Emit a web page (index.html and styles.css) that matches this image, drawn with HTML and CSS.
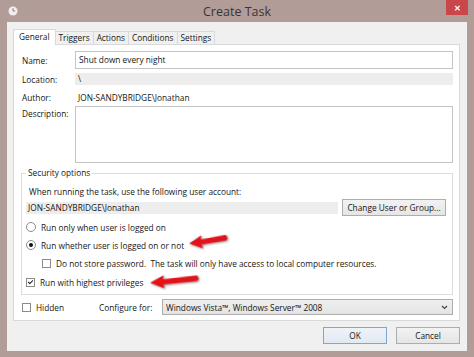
FILE: index.html
```html
<!DOCTYPE html>
<html lang="en">
<head>
    <meta charset="UTF-8">
    <title>Create Task</title>
    <link rel="stylesheet" href="styles.css">
</head>
<body>
    <div class="window">
        <div class="titlebar">
            <svg class="app-icon" width="10" height="10" viewBox="0 0 10 10">
                <circle cx="5" cy="5" r="4.5" fill="#f2eeed"/>
                <path d="M5 2.2 V5 H7.2" stroke="#8a7f7d" stroke-width="1" fill="none"/>
            </svg>
            <div class="title">Create Task</div>
            <div class="close-btn">&#x2715;</div>
        </div>

        <div class="client">
            <div class="tabs">
                <div class="tab active">General</div>
                <div class="tab">Triggers</div>
                <div class="tab">Actions</div>
                <div class="tab">Conditions</div>
                <div class="tab">Settings</div>
            </div>

            <div class="panel">
                <div class="row row-name">
                    <span class="label">Name:</span>
                    <div class="field input">Shut down every night</div>
                </div>
                <div class="row row-location">
                    <span class="label">Location:</span>
                    <div class="field readonly">\</div>
                </div>
                <div class="row row-author">
                    <span class="label">Author:</span>
                    <div class="field plain">JON-SANDYBRIDGE\Jonathan</div>
                </div>
                <div class="row row-desc">
                    <span class="label">Description:</span>
                    <div class="field textarea"></div>
                </div>

                <fieldset class="security">
                    <legend>Security options</legend>
                    <div class="note">When running the task, use the following user account:</div>
                    <div class="account-row">
                        <div class="account">JON-SANDYBRIDGE\Jonathan</div>
                        <div class="btn change-btn">Change User or Group...</div>
                    </div>
                    <div class="option"><span class="radio"></span>Run only when user is logged on</div>
                    <div class="option"><span class="radio checked"></span>Run whether user is logged on or not</div>
                    <div class="option sub"><span class="check"></span>Do not store password.&nbsp; The task will only have access to local computer resources.</div>
                    <div class="option"><span class="check checked"></span>Run with highest privileges</div>
                </fieldset>

                <div class="config-row">
                    <div class="option hidden-opt"><span class="check"></span>Hidden</div>
                    <span class="config-label">Configure for:</span>
                    <div class="combo">
                        <span>Windows Vista&trade;, Windows Server&trade; 2008</span>
                        <svg width="7" height="5" viewBox="0 0 7 5"><path d="M1 1 L3.5 3.5 L6 1" stroke="#444" stroke-width="1.2" fill="none"/></svg>
                    </div>
                </div>
            </div>

            <div class="buttons">
                <div class="btn default">OK</div>
                <div class="btn">Cancel</div>
            </div>
        </div>

        <!-- red annotation arrows drawn over the dialog -->
        <svg class="arrow arrow-one" width="40" height="14" viewBox="0 0 40 14">
            <path d="M0 7 L13 0.5 L12 4.5 L37 3 Q40 5.5 37 8.5 L12 9.5 L13 13.5 Z" fill="#e3121b"/>
        </svg>
        <svg class="arrow arrow-two" width="50" height="14" viewBox="0 0 50 14">
            <path d="M0 7 L14 0.5 L13 4.5 L47 3 Q50 5.5 47 8.5 L13 9.5 L14 13.5 Z" fill="#e3121b"/>
        </svg>
    </div>
</body>
</html>
```

FILE: styles.css
```css
:root {
    --frame-color: #b19c98;
    --client-bg: #f0f0f0;
    --panel-border: #d9d9d9;
    --field-border: #c4c4c4;
    --text-color: #151515;
}
body {
    margin: 0;
    font-family: 'Open Sans', 'Noto Sans', sans-serif;
    font-size: 8.3px;
    color: var(--text-color);
}
.window {
    position: relative;
    width: 474px;
    height: 357px;
    background-color: var(--frame-color);
    display: flex;
    flex-direction: column;
    box-sizing: border-box;
}
.titlebar {
    height: 22px;
    display: flex;
    align-items: center;
    position: relative;
}
.app-icon {
    margin-left: 8px;
}
.title {
    position: absolute;
    left: 0;
    right: 0;
    top: 3px;
    text-align: center;
    font-size: 12.5px;
    color: #3a3434;
}
.close-btn {
    position: absolute;
    top: 0;
    right: 6px;
    width: 22px;
    height: 15px;
    background-color: #c9464b;
    color: #fff;
    font-size: 8px;
    font-weight: 700;
    display: flex;
    align-items: center;
    justify-content: center;
}
.client {
    margin: 0 7px 6px 7px;
    height: 329px;
    background-color: var(--client-bg);
    padding: 8px 7px 0 6px;
    box-sizing: border-box;
}
.tabs {
    display: flex;
    align-items: flex-end;
    height: 14px;
    position: relative;
    z-index: 1;
}
.tab {
    height: 12px;
    line-height: 12px;
    padding: 0 3px;
    border: 1px solid var(--panel-border);
    border-bottom: none;
    margin-left: -1px;
    background-color: #f0f0f0;
}
.tab.active {
    height: 15px;
    line-height: 14px;
    margin-left: 0;
    margin-bottom: -1px;
    background-color: #fff;
    padding: 0 5px;
}
.panel {
    height: 277px;
    box-sizing: border-box;
    border: 1px solid var(--panel-border);
    background-color: #fff;
    padding: 6px 6px 0 8px;
}
.row {
    display: flex;
    align-items: center;
}
.label {
    width: 53px;
    flex-shrink: 0;
}
.field {
    flex: 1;
    box-sizing: border-box;
}
.input {
    height: 18px;
    line-height: 16px;
    border: 1px solid var(--field-border);
    padding: 0 3px;
}
.row-location {
    margin-top: 4px;
}
.readonly {
    height: 12px;
    line-height: 12px;
    background-color: #ededed;
    padding: 0 3px;
}
.row-author {
    margin-top: 6px;
    height: 12px;
}
.plain {
    padding-left: 3px;
}
.row-desc {
    margin-top: 3px;
    align-items: flex-start;
}
.row-desc .label {
    padding-top: 2px;
}
.textarea {
    height: 57px;
    border: 1px solid var(--field-border);
}
.security {
    margin: 4px 0 0 -1px;
    padding: 0 0 3px 4px;
    border: 1px solid #dcdcdc;
    min-width: 0;
}
.security legend {
    padding: 0 2px;
    margin-left: 0;
    line-height: 12px;
}
.note {
    margin-top: 7px;
    line-height: 12px;
    padding-left: 3px;
}
.account-row {
    display: flex;
    align-items: center;
    margin-top: 1px;
    padding-right: 6px;
}
.account {
    flex: 1;
    height: 12px;
    line-height: 12px;
    background-color: #ededed;
    padding-left: 2px;
}
.btn {
    box-sizing: border-box;
    height: 17px;
    border: 1px solid #adadad;
    background: linear-gradient(#f2f2f2, #e5e5e5);
    display: flex;
    align-items: center;
    justify-content: center;
}
.change-btn {
    width: 104px;
    margin-left: 4px;
}
.option {
    display: flex;
    align-items: center;
    height: 18px;
}
.account-row + .option {
    margin-top: 2px;
}
.option.sub {
    padding-left: 16px;
}
.option.sub + .option {
    margin-top: 1px;
}
.radio {
    width: 10px;
    height: 10px;
    box-sizing: border-box;
    border: 1px solid #8b8b8b;
    border-radius: 50%;
    margin-right: 5px;
    display: flex;
    align-items: center;
    justify-content: center;
}
.radio.checked::after {
    content: "";
    width: 4px;
    height: 4px;
    border-radius: 50%;
    background-color: #111;
}
.check {
    width: 9px;
    height: 9px;
    box-sizing: border-box;
    border: 1px solid #8b8b8b;
    margin-right: 5px;
    display: flex;
    align-items: center;
    justify-content: center;
}
.check.checked::after {
    content: "";
    width: 4px;
    height: 2px;
    border-left: 1.5px solid #222;
    border-bottom: 1.5px solid #222;
    transform: translateY(-1px) rotate(-45deg);
}
.config-row {
    display: flex;
    align-items: center;
    margin-top: 4px;
    height: 16px;
}
.hidden-opt {
    width: 77px;
    padding-left: 0;
}
.config-label {
    width: 63px;
}
.combo {
    flex: 1;
    height: 16px;
    box-sizing: border-box;
    border: 1px solid #adadad;
    background: linear-gradient(#efefef, #e4e4e4);
    display: flex;
    align-items: center;
    justify-content: space-between;
    padding: 0 4px 0 3px;
}
.buttons {
    display: flex;
    justify-content: flex-end;
    gap: 9px;
    margin-top: 6px;
}
.buttons .btn {
    width: 64px;
}
.btn.default {
    border-color: #7aa7d6;
    background: linear-gradient(#eef3f8, #e2e9f1);
}
.arrow {
    position: absolute;
    filter: drop-shadow(1px 1.5px 1px rgba(60, 0, 0, 0.55));
}
.arrow-one {
    left: 189px;
    top: 234px;
    transform: rotate(-7deg);
}
.arrow-two {
    left: 150px;
    top: 274px;
    transform: rotate(-4deg);
}
```
